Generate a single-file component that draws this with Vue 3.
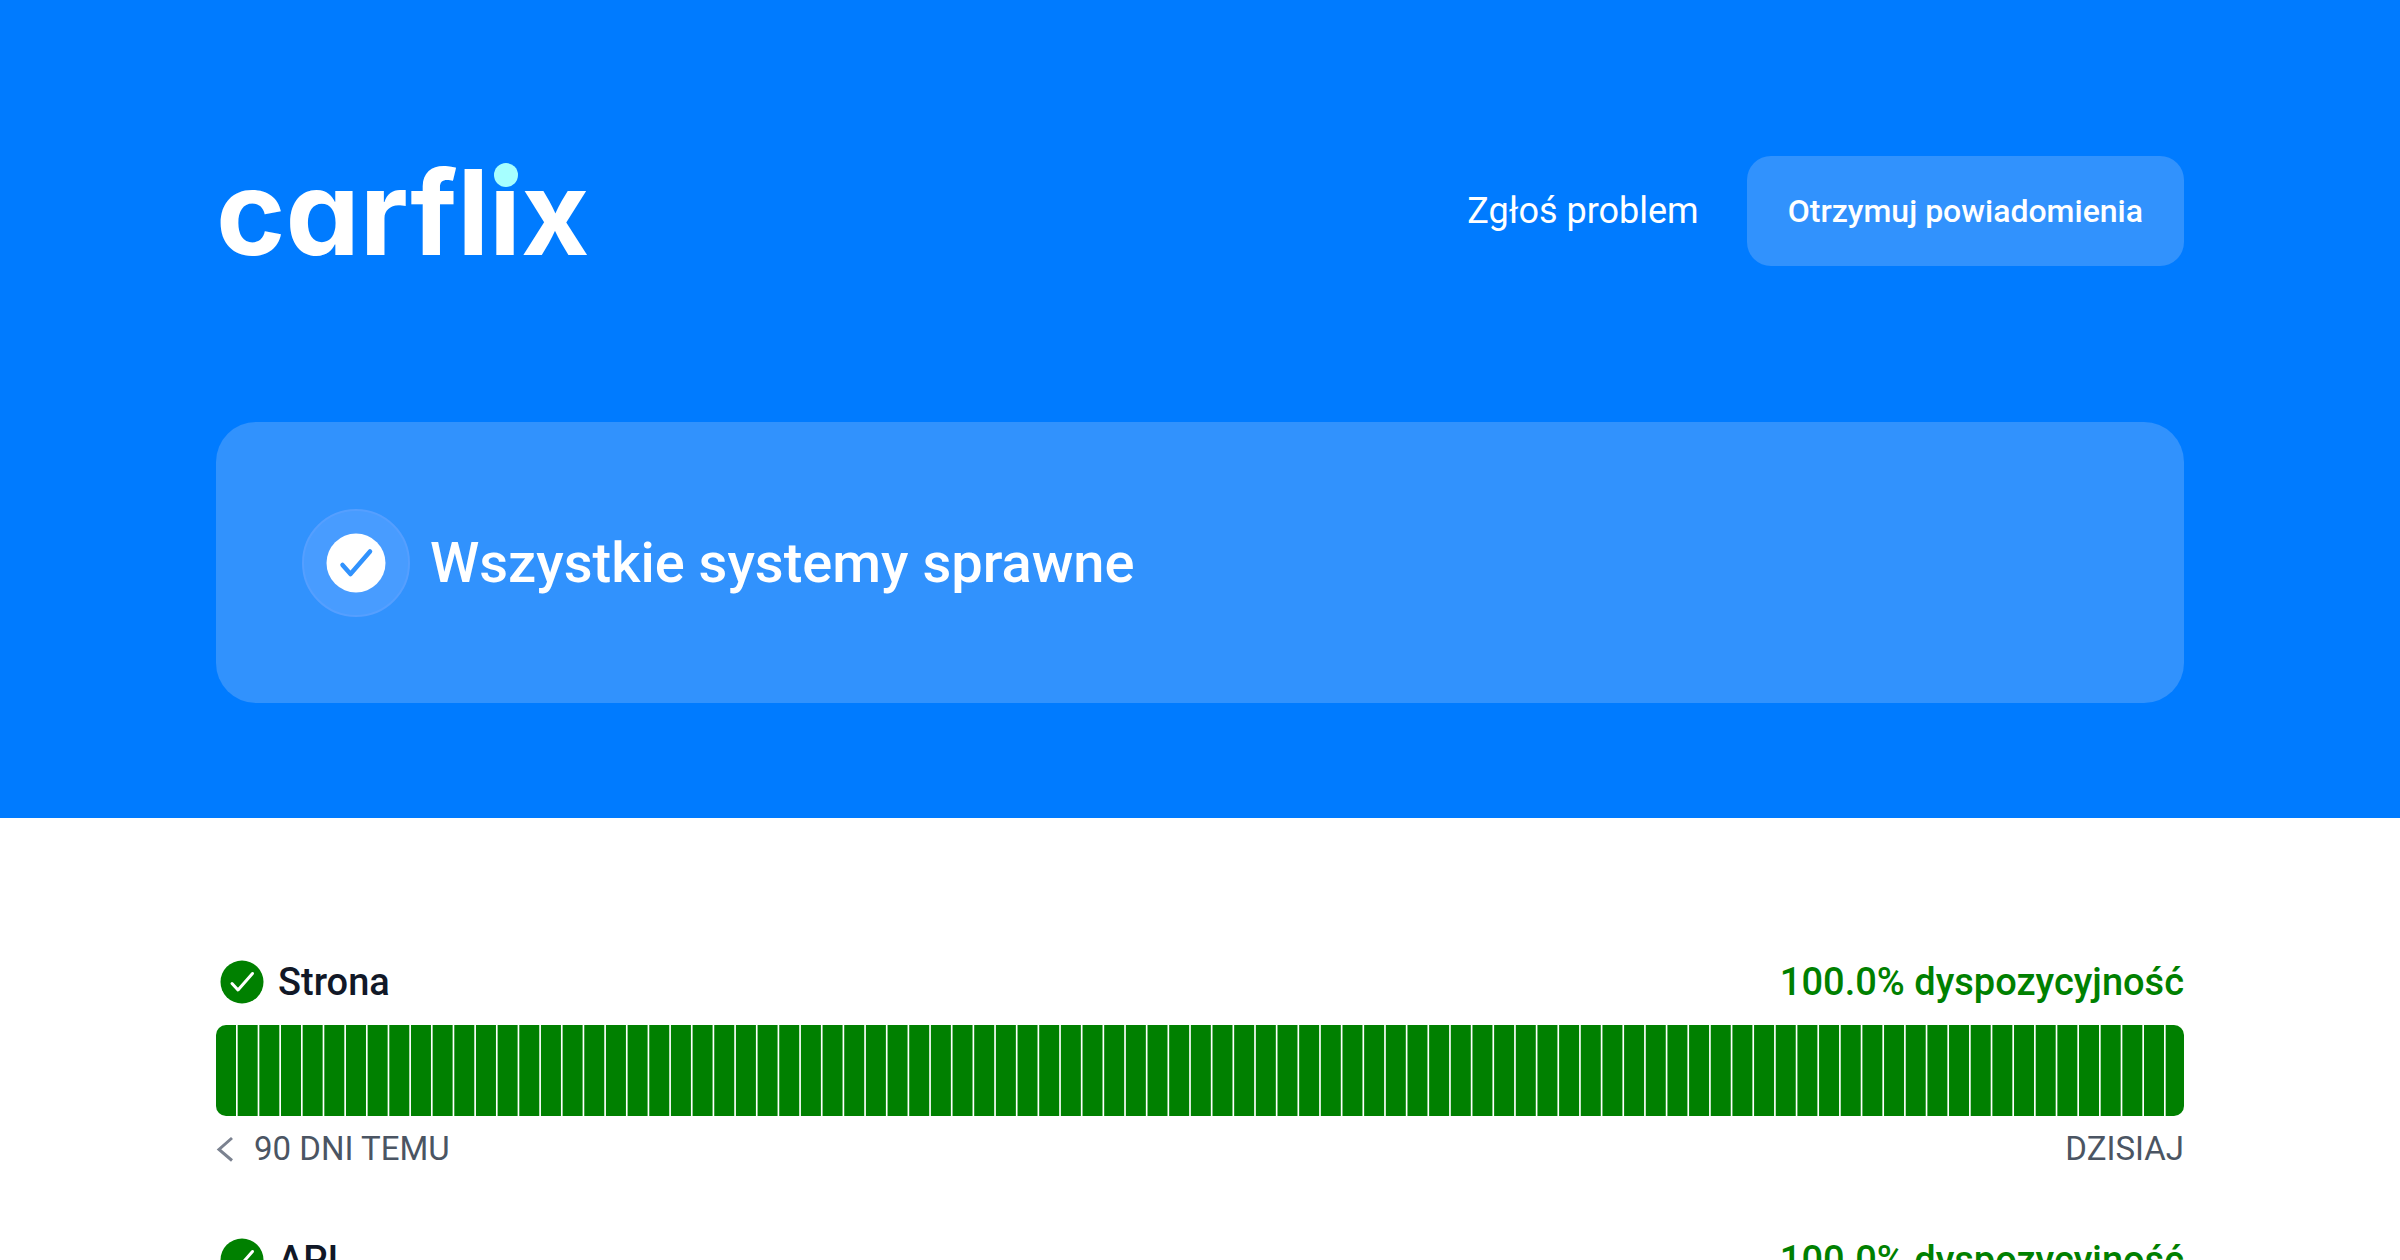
<script setup>
import { ref } from 'vue';

const DAYS = 91;
const BAR_STEP = 13;

const services = ref([
    { id: 1, name: 'Strona', uptime: '100.0%' },
    { id: 2, name: 'API', uptime: '100.0%' },
]);
</script>

<template>
    <div class="status-page">
        <div class="hero">
            <header class="top-bar">
                <a href="#" class="logo">
                    <svg width="400" height="150" viewBox="0 0 400 150">
                        <text class="logo-text" x="0" y="119">carflix</text>
                        <circle cx="290" cy="39" r="12" fill="#a6ffff" />
                    </svg>
                </a>
                <nav class="actions">
                    <a href="#" class="report-link">Zgłoś problem</a>
                    <button type="button" class="subscribe">Otrzymuj powiadomienia</button>
                </nav>
            </header>

            <section class="overall">
                <span class="overall-icon">
                    <svg width="60" height="60" viewBox="0 0 60 60" fill="none">
                        <circle cx="30" cy="30" r="29.5" fill="#fff" />
                        <path d="M16.5 32 L24.5 41 L44 18.500" stroke="#3192fd" stroke-width="4.500" stroke-linecap="round" stroke-linejoin="round" />
                    </svg>
                </span>
                <h1>Wszystkie systemy sprawne</h1>
            </section>
        </div>

        <main class="services">
            <section v-for="service in services" :key="service.id" class="service">
                <div class="service-head">
                    <h2>
                        <svg width="52" height="52" viewBox="0 0 52 52" fill="none">
                            <circle cx="26" cy="26" r="21.5" fill="#008000" />
                            <path d="M16 27.500 L22 34 L36.500 17.500" stroke="#fff" stroke-width="3" stroke-linecap="round" stroke-linejoin="round" />
                        </svg>
                        {{ service.name }}
                    </h2>
                    <span class="uptime">{{ service.uptime }} dyspozycyjność</span>
                </div>

                <svg class="days" viewBox="0 0 1181 55" preserveAspectRatio="none">
                    <rect v-for="n in DAYS" :key="n" :x="(n - 1) * BAR_STEP" y="0" width="12" height="55" />
                </svg>

                <div class="service-foot">
                    <span class="range">
                        <svg width="18" height="28" viewBox="0 0 18 28" fill="none">
                            <path d="M16 4 L3 15.500 L16 26.500" stroke="#7b8290" stroke-width="3" />
                        </svg>
                        90 DNI TEMU
                    </span>
                    <span>DZISIAJ</span>
                </div>
            </section>
        </main>
    </div>
</template>

<style>
body {
    margin: 0;
    background-color: #fff;
}
</style>

<style scoped>
.status-page {
    font-family: Roboto, "Liberation Sans", sans-serif;
    color: #111827;
}

.hero {
    padding: 136px 9% 115px;
    background-color: #007bff;
    color: #fff;
}

.top-bar {
    display: flex;
    align-items: center;
    justify-content: space-between;
    margin-bottom: 136px;
}

.logo,
.logo svg {
    display: block;
}

.logo-text {
    font-family: Inter, sans-serif;
    font-size: 118px;
    font-weight: 700;
    font-feature-settings: "cv11";
    fill: #fff;
}

.actions {
    display: flex;
    align-items: center;
    gap: 48px;
}

.report-link {
    color: #fff;
    font-size: 36px;
    text-decoration: none;
}

.subscribe {
    height: 110px;
    padding: 0 41px;
    border: none;
    border-radius: 24px;
    background-color: #3192fd;
    color: #fff;
    font-family: inherit;
    font-size: 32px;
    font-weight: 500;
    cursor: pointer;
}

.overall {
    display: flex;
    align-items: center;
    gap: 20px;
    min-height: 281px;
    padding: 0 86px;
    border-radius: 40px;
    background-color: #3192fd;
}

.overall-icon {
    display: flex;
    align-items: center;
    justify-content: center;
    width: 108px;
    height: 108px;
    box-sizing: border-box;
    border: 2px solid #559fff;
    border-radius: 50%;
    background-color: #489cff;
}

.overall h1 {
    margin: 0;
    font-size: 56px;
    line-height: 64px;
    font-weight: 500;
}

.services {
    padding: 136px 9% 60px;
}

.service {
    margin-bottom: 60px;
}

.service-head {
    display: flex;
    align-items: center;
    justify-content: space-between;
    height: 56px;
    margin-bottom: 15px;
    font-size: 38px;
    font-weight: 500;
}

.service-head h2 {
    display: flex;
    align-items: center;
    gap: 10px;
    margin: 0;
    font-size: inherit;
    font-weight: inherit;
}

.uptime {
    color: #008000;
}

.days {
    display: block;
    width: 100%;
    height: 91px;
    border-radius: 10px;
    fill: #008000;
}

.service-foot {
    display: flex;
    align-items: center;
    justify-content: space-between;
    height: 48px;
    margin-top: 8px;
    color: #4b5563;
    font-size: 33px;
}

.range {
    display: flex;
    align-items: center;
    gap: 20px;
}
</style>
